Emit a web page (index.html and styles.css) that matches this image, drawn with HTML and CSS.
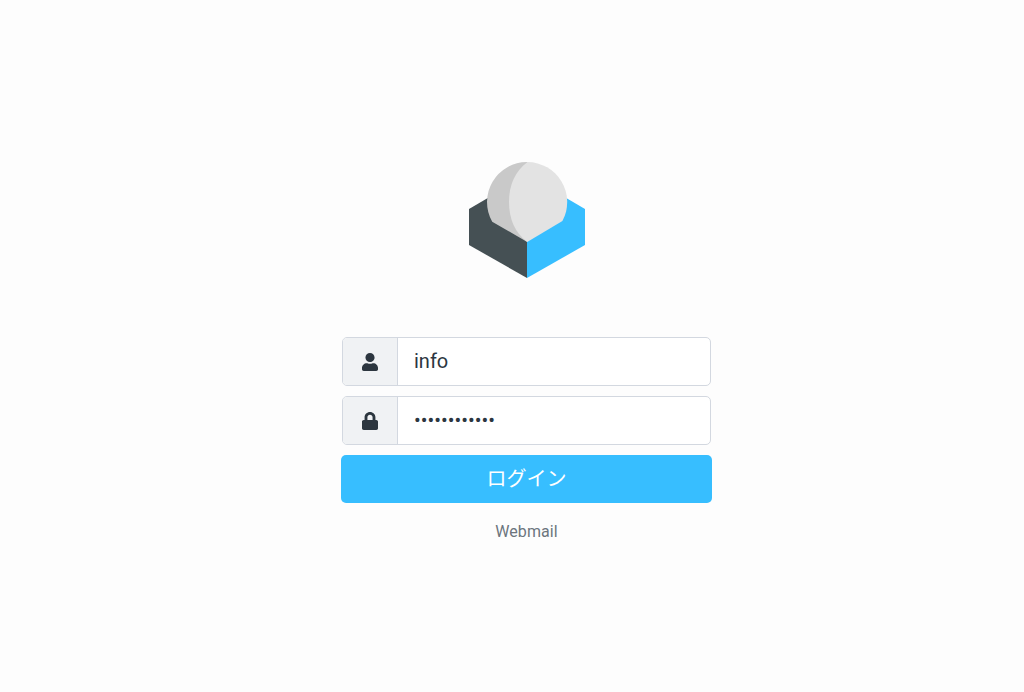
FILE: index.html
```html
<!DOCTYPE html>
<html lang="ja">
    <head>
        <meta charset="UTF-8"/>
        <meta name="viewport" content="width=device-width, initial-scale=1.0"/>
        <title>Login</title>
        <link rel="stylesheet" href="styles.css">
    </head>
    <body>
        <div class="container">
            <div class="logo">
                <svg width="116" height="116" viewBox="0 0 116 116">
                    <path fill="#37beff" d="M58 116 116 83 116 47 58 13Z"/>
                    <path fill="#455054" d="M58 116 0 83 0 47 58 13Z"/>
                    <path fill="#c9c9c9" d="M58.500 0A40 40 0 0 0 23.200 59.700L58.200 80Z"/>
                    <path fill="#e3e3e3" d="M58.500 0A40 40 0 0 1 93.400 59L58.200 80Q40 66 40 40 40 14 58.500 0Z"/>
                </svg>
            </div>
            <form class="login-form">
                <div class="input-group">
                    <span class="input-icon">
                        <svg width="16" height="18" viewBox="0 0 448 512" preserveAspectRatio="none">
                            <path d="M224 256c70.700 0 128-57.300 128-128S294.700 0 224 0 96 57.300 96 128s57.300 128 128 128zm89.600 32h-16.700c-22.200 10.200-46.900 16-72.900 16s-50.600-5.800-72.900-16h-16.700C60.200 288 0 348.200 0 422.400V464c0 26.500 21.500 48 48 48h352c26.500 0 48-21.500 48-48v-41.600c0-74.200-60.200-134.400-134.400-134.400z"/>
                        </svg>
                    </span>
                    <input type="text" value="info">
                </div>
                <div class="input-group">
                    <span class="input-icon">
                        <svg width="16" height="18" viewBox="0 0 448 512" preserveAspectRatio="none">
                            <path d="M400 224h-24v-72C376 68.200 307.800 0 224 0S72 68.200 72 152v72H48c-26.500 0-48 21.500-48 48v192c0 26.500 21.500 48 48 48h352c26.500 0 48-21.500 48-48V272c0-26.500-21.500-48-48-48zm-104 0H152v-72c0-39.700 32.300-72 72-72s72 32.300 72 72v72z"/>
                        </svg>
                    </span>
                    <input type="password" value="************">
                </div>
                <button type="button" class="submit">ログイン</button>
            </form>
            <a class="webmail" href="#">Webmail</a>
        </div>
    </body>
</html>
```

FILE: styles.css
```css
body {
    font-family: "Roboto", "Noto Sans CJK JP", sans-serif;
    background: #fdfdfd;
    color: #2c363f;
    margin: 0;
}

.container {
    display: flex;
    flex-direction: column;
    align-items: center;
    width: 371px;
    margin-left: 341px;
    padding-top: 162px;
}

.logo {
    height: 116px;
    margin-bottom: 59px;
}

.logo svg {
    display: block;
}

.login-form {
    display: flex;
    flex-direction: column;
    width: 100%;
}

.input-group {
    display: flex;
    height: 49px;
    margin: 0 1px 10px;
    box-sizing: border-box;
    border: 1px solid #d3d8e0;
    border-radius: 5px;
    background: #fff;
    overflow: hidden;
}

.input-icon {
    display: flex;
    justify-content: center;
    align-items: center;
    width: 55px;
    flex-shrink: 0;
    box-sizing: border-box;
    background: #f0f2f4;
    border-right: 1px solid #d3d8e0;
}

.input-icon svg {
    fill: #2c363f;
}

.input-group input {
    flex: 1;
    min-width: 0;
    border: 0;
    outline: 0;
    padding: 0 16px 2px;
    font-family: inherit;
    font-size: 20px;
    color: #2c363f;
    background: transparent;
}

.submit {
    height: 48px;
    border: 0;
    border-radius: 5px;
    background: #37beff;
    color: #fff;
    font-family: "Noto Sans CJK JP", sans-serif;
    font-size: 20px;
    font-weight: 400;
    padding: 0 0 4px;
}

.webmail {
    margin-top: 19px;
    font-size: 16px;
    line-height: 19px;
    letter-spacing: 0.1px;
    color: #6c757d;
    text-decoration: none;
}
```
